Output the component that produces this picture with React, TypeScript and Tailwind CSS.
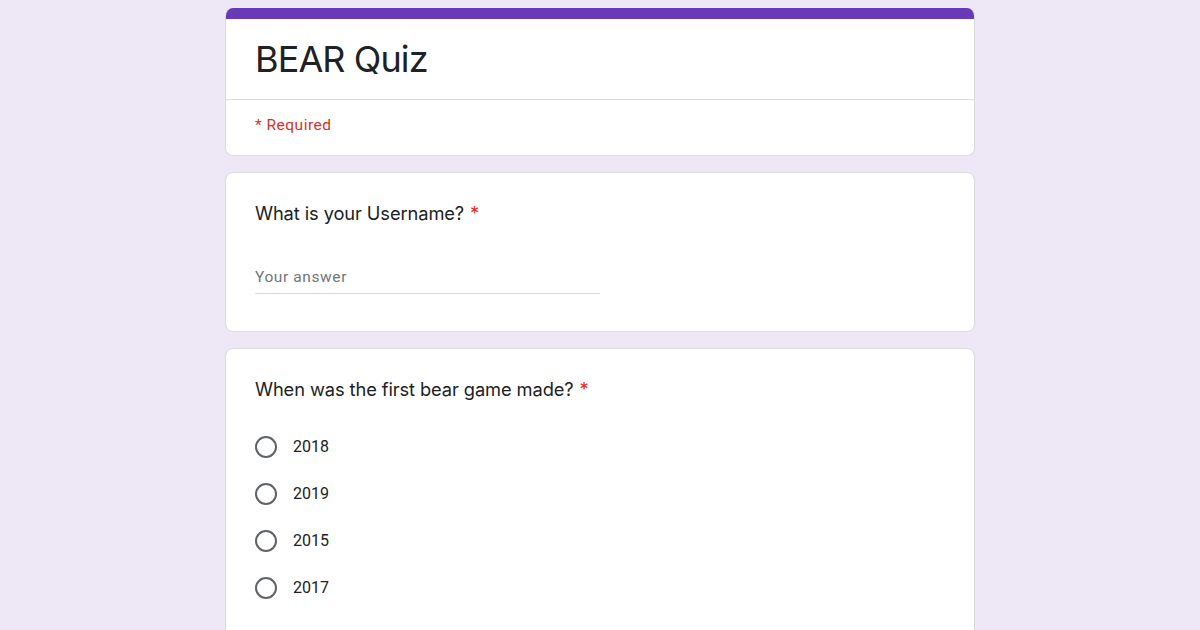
const options = ['2018', '2019', '2015', '2017']

function Asterisk() {
  return <span className="text-[#d93025] ml-[6px]">*</span>
}

export default function App() {
  return (
    <div className="min-h-screen w-[1200px] h-[630px] overflow-hidden bg-[#ede7f6] font-['Roboto',sans-serif]">
      <div className="w-[750px] mx-auto pt-[8px] flex flex-col gap-[16px]">
        {/* header card */}
        <div className="bg-white rounded-[8px] border border-[#dadce0] border-t-0 overflow-hidden">
          <div className="h-[11px] bg-[#673ab7]" />
          <div className="h-[81px] px-[29px] flex items-center border-b border-[#dadce0]">
            <h1 className="text-[36px] leading-none text-[#202124] font-['Inter',sans-serif] tracking-[-0.9px] pb-[1px]">
              BEAR Quiz
            </h1>
          </div>
          <div className="h-[55px] px-[29px] flex items-center pb-[4px]">
            <span className="text-[15.5px] text-[#d93025] tracking-[0.5px]">* Required</span>
          </div>
        </div>

        {/* username card */}
        <div className="bg-white rounded-[8px] border border-[#dadce0] h-[160px] px-[29px] pt-[28px]">
          <div className="text-[18.3px] leading-[24px] text-[#202124] font-['Inter',sans-serif] tracking-[-0.1px]">
            What is your Username?
            <Asterisk />
          </div>
          <div className="mt-[39px] w-[345px] border-b border-[#dadce0] pb-[9px]">
            <span className="block text-[15.5px] leading-[20px] text-[#70757a] tracking-[0.6px] relative top-[3px]">Your answer</span>
          </div>
        </div>

        {/* question card */}
        <div className="bg-white rounded-[8px] border border-[#dadce0] h-[320px] px-[29px] pt-[28px]">
          <div className="text-[18.3px] leading-[24px] text-[#202124] font-['Inter',sans-serif] tracking-[-0.1px]">
            When was the first bear game made?
            <Asterisk />
          </div>
          <div className="mt-[22px] flex flex-col">
            {options.map((o) => (
              <label key={o} className="h-[47px] flex items-center gap-[16px]">
                <span className="w-[22px] h-[22px] rounded-full border-2 border-[#5f6368] shrink-0" />
                <span className="text-[16px] text-[#202124]">{o}</span>
              </label>
            ))}
          </div>
        </div>
      </div>
    </div>
  )
}
